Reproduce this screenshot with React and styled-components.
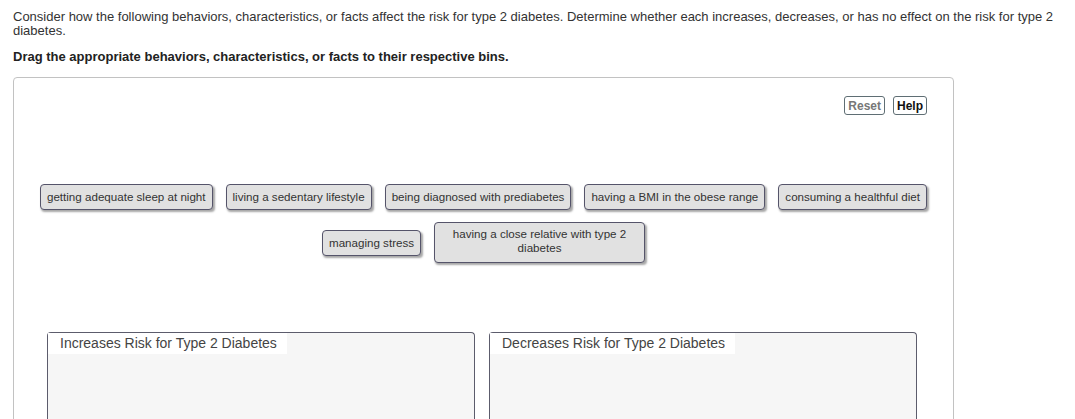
import styled, { createGlobalStyle } from "styled-components";

const Global = createGlobalStyle`
  body {
    margin: 0;
    background: #fff;
    font-family: "Liberation Sans", Arial, Helvetica, sans-serif;
    color: #333;
  }
`;

const Page = styled.div`
  padding: 10px 13px 0 13px;
  width: 1075px;
  box-sizing: border-box;
`;

const Prompt = styled.p`
  margin: 0;
  font-size: 13px;
  line-height: 14px;
  color: ${(p) => (p.bold ? "#222" : "#333")};
  font-weight: ${(p) => (p.bold ? "bold" : "normal")};
  margin-top: ${(p) => p.mt || 0}px;
  margin-bottom: ${(p) => p.mb || 0}px;
`;

const Board = styled.div`
  width: 941px;
  height: 360px;
  box-sizing: border-box;
  border: 1px solid #c2c2c2;
  border-radius: 4px;
  padding: 18px 0 0 0;
`;

const Toolbar = styled.div`
  display: flex;
  justify-content: flex-end;
  gap: 8px;
  padding-right: 26px;
`;

const ToolButton = styled.button`
  font-family: "Liberation Sans", Arial, sans-serif;
  font-size: 12px;
  font-weight: bold;
  height: 19px;
  padding: 0 3px;
  background: #fff;
  color: ${(p) => (p.muted ? "#777" : "#111")};
  border: 1px solid #5f6e74;
  border-radius: 3px;
  line-height: 16px;
`;

const Pool = styled.div`
  display: flex;
  flex-wrap: wrap;
  justify-content: center;
  align-items: center;
  align-content: flex-start;
  column-gap: 13px;
  row-gap: 12px;
  padding: 69px 14px 0 14px;
  height: 217px;
  box-sizing: border-box;
`;

const Chip = styled.div`
  width: ${(p) => (p.tall ? "211px" : "auto")};
  box-sizing: border-box;
  padding: ${(p) => (p.tall ? "4px 8px 7px" : "5px 6px 5px")};
  min-height: ${(p) => (p.tall ? 41 : 25)}px;
  background: #e1e1e1;
  border: 1.5px solid #55546a;
  border-radius: 4px;
  box-shadow: 1.5px 2px 2px rgba(0, 0, 0, 0.35);
  font-size: 11.6px;
  line-height: 14px;
  color: #333;
  text-align: center;
`;

const Bins = styled.div`
  display: flex;
  gap: 14px;
  padding-left: 33px;
`;

const Bin = styled.div`
  width: 428px;
  height: 120px;
  box-sizing: border-box;
  background: #f6f6f6;
  border: 1.5px solid #5c5c6c;
  border-bottom: none;
  border-radius: 4px 4px 0 0;
`;

const BinLabel = styled.div`
  display: inline-block;
  background: #fff;
  padding: 3px 10px 3px 12px;
  font-size: 14px;
  line-height: 15px;
  color: #444;
`;

const chips = [
  "getting adequate sleep at night",
  "living a sedentary lifestyle",
  "being diagnosed with prediabetes",
  "having a BMI in the obese range",
  "consuming a healthful diet",
  "managing stress",
];

export default function App() {
  return (
    <Page>
      <Global />
      <Prompt>
        Consider how the following behaviors, characteristics, or facts affect the risk for type 2 diabetes. Determine whether each increases, decreases, or has no effect on the risk for type 2 diabetes.
      </Prompt>
      <Prompt bold mt={12} mb={13}>
        Drag the appropriate behaviors, characteristics, or facts to their respective bins.
      </Prompt>
      <Board>
        <Toolbar>
          <ToolButton muted>Reset</ToolButton>
          <ToolButton>Help</ToolButton>
        </Toolbar>
        <Pool>
          {chips.map((c) => (
            <Chip key={c}>{c}</Chip>
          ))}
          <Chip tall>having a close relative with type 2 diabetes</Chip>
        </Pool>
        <Bins>
          <Bin>
            <BinLabel>Increases Risk for Type 2 Diabetes</BinLabel>
          </Bin>
          <Bin>
            <BinLabel>Decreases Risk for Type 2 Diabetes</BinLabel>
          </Bin>
        </Bins>
      </Board>
    </Page>
  );
}
